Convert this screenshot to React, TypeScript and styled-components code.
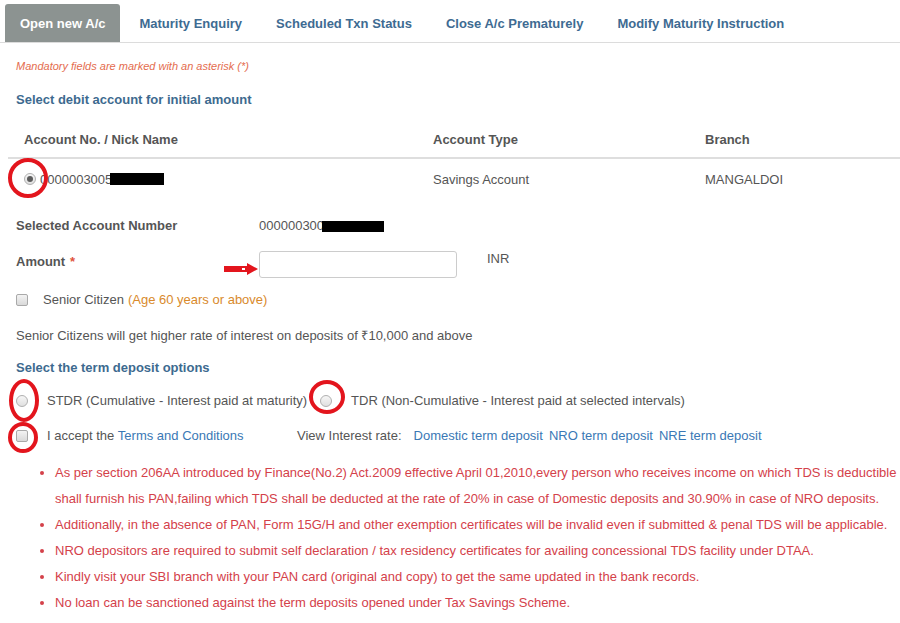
import React from "react";
import styled, { createGlobalStyle } from "styled-components";

const Global = createGlobalStyle`
  html, body { margin: 0; padding: 0; background: #fff; }
  body { font-family: "Liberation Sans", Arial, sans-serif; font-size: 13px; color: #555; }
  * { box-sizing: border-box; }
`;

const Page = styled.div`
  position: relative;
  width: 900px;
  height: 623px;
  overflow: hidden;
`;

const TabBar = styled.div`
  display: flex;
  padding: 4px 0 0 5px;
  border-bottom: 1px solid #dcdcdc;
`;

const Tab = styled.div<{ $active?: boolean }>`
  height: 38px;
  padding: 0 15px;
  margin-right: 4px;
  display: flex;
  align-items: center;
  font-weight: bold;
  font-size: 13px;
  border-radius: 3px 3px 0 0;
  background: ${(p) => (p.$active ? "#8c9391" : "transparent")};
  color: ${(p) => (p.$active ? "#ffffff" : "#3e6b92")};
`;

const Content = styled.div`
  padding: 0 0 0 16px;
`;

const Mandatory = styled.div`
  margin-top: 16px;
  font-size: 11px;
  line-height: 14px;
  font-style: italic;
  color: #e46c4e;
`;

const SectionTitle = styled.div<{ $mt: number }>`
  margin-top: ${(p) => p.$mt}px;
  font-size: 13px;
  line-height: 16px;
  font-weight: bold;
  color: #3d6a8f;
`;

const Table = styled.div`
  margin: 15px 0 0 -8px;
  display: grid;
  grid-template-columns: 425px 272px 1fr;
`;

const HeadCell = styled.div<{ $first?: boolean }>`
  height: 36px;
  display: flex;
  align-items: center;
  padding-left: ${(p) => (p.$first ? 16 : 0)}px;
  padding-bottom: 2px;
  font-weight: bold;
  color: #555;
  border-bottom: 2px solid #dedede;
`;

const BodyCell = styled.div<{ $first?: boolean }>`
  height: 40px;
  display: flex;
  align-items: center;
  padding-left: ${(p) => (p.$first ? 16 : 0)}px;
  color: #555;
`;

const Radio = styled.span<{ $checked?: boolean }>`
  display: inline-block;
  position: relative;
  width: 12px;
  height: 12px;
  border-radius: 50%;
  border: 1px solid #b0b0b0;
  background: linear-gradient(#f6f6f6, #e0e0e0);
  flex: none;
  &::after {
    content: "";
    display: ${(p) => (p.$checked ? "block" : "none")};
    position: absolute;
    left: 2px;
    top: 2px;
    width: 6px;
    height: 6px;
    border-radius: 50%;
    background: #5c5c5c;
  }
`;

const Checkbox = styled.span`
  display: inline-block;
  width: 12px;
  height: 12px;
  border-radius: 2px;
  border: 1px solid #a9a9a9;
  background: linear-gradient(#f3f3f3, #d9d9d9);
  flex: none;
`;

const Redact = styled.span<{ $w: number; $h: number }>`
  display: inline-block;
  width: ${(p) => p.$w}px;
  height: ${(p) => p.$h}px;
  background: #000;
  vertical-align: middle;
  margin-left: -2px;
`;

const AccNo = styled.span`
  margin-left: 4px;
  display: inline-flex;
  align-items: center;
`;

const FormRow = styled.div<{ $mt: number }>`
  margin-top: ${(p) => p.$mt}px;
  display: flex;
  align-items: flex-start;
`;

const Label = styled.div<{ $mt?: number }>`
  width: 243px;
  flex: none;
  font-weight: bold;
  line-height: 16px;
  margin-top: ${(p) => p.$mt ?? 0}px;
  color: #555;
`;

const Value = styled.div`
  line-height: 20px;
  display: flex;
  align-items: center;
  color: #555;
`;

const Star = styled.span`
  color: #e0533c;
  margin-left: 5px;
`;

const AmountInput = styled.input`
  width: 198px;
  height: 27px;
  border: 1px solid #cccccc;
  border-radius: 3px;
  outline: none;
  font: inherit;
  padding: 0 6px;
`;

const Unit = styled.div`
  margin-left: 30px;
  line-height: 16px;
  color: #555;
`;

const CheckRow = styled.div<{ $mt: number }>`
  margin-top: ${(p) => p.$mt}px;
  display: flex;
  align-items: center;
  line-height: 16px;
  color: #555;
`;

const Gap = styled.span<{ $w: number }>`
  display: inline-block;
  width: ${(p) => p.$w}px;
  flex: none;
`;

const Orange = styled.span`
  color: #d98a2c;
  margin-left: 4px;
`;

const Para = styled.div<{ $mt: number }>`
  margin-top: ${(p) => p.$mt}px;
  line-height: 16px;
  color: #555;
`;

const LinkText = styled.span`
  color: #3a78b5;
`;

const AcceptGroup = styled.div`
  width: 281px;
  flex: none;
  display: flex;
  align-items: center;
`;

const LinkGroup = styled.div`
  display: flex;
  align-items: center;
  gap: 6px;
`;

const RateLabel = styled.span`
  margin-right: 6px;
`;

const Notes = styled.ul`
  margin: 16px 0 0 0;
  padding-left: 39px;
  color: #d4414a;
  line-height: 26px;
  font-size: 13px;
`;

const Note = styled.li`
  white-space: nowrap;
`;

const Ring = styled.div`
  position: absolute;
  border: 4px solid #e3151d;
  border-radius: 50%;
  pointer-events: none;
`;

const ArrowBox = styled.svg`
  position: absolute;
  left: 223px;
  top: 262px;
`;

export default function App() {
  return (
    <Page>
      <Global />
      <TabBar>
        <Tab $active>Open new A/c</Tab>
        <Tab>Maturity Enquiry</Tab>
        <Tab>Scheduled Txn Status</Tab>
        <Tab>Close A/c Prematurely</Tab>
        <Tab>Modify Maturity Instruction</Tab>
      </TabBar>
      <Content>
        <Mandatory>Mandatory fields are marked with an asterisk (*)</Mandatory>
        <SectionTitle $mt={19}>Select debit account for initial amount</SectionTitle>
        <Table>
          <HeadCell $first>Account No. / Nick Name</HeadCell>
          <HeadCell>Account Type</HeadCell>
          <HeadCell>Branch</HeadCell>
          <BodyCell $first>
            <Radio $checked />
            <AccNo>
              0000003005
              <Redact $w={54} $h={12} />
            </AccNo>
          </BodyCell>
          <BodyCell>Savings Account</BodyCell>
          <BodyCell>MANGALDOI</BodyCell>
        </Table>
        <FormRow $mt={17}>
          <Label $mt={2}>Selected Account Number</Label>
          <Value>
            000000300
            <Redact $w={62} $h={11} />
          </Value>
        </FormRow>
        <FormRow $mt={15}>
          <Label $mt={3}>
            Amount<Star>*</Star>
          </Label>
          <AmountInput type="text" />
          <Unit>INR</Unit>
        </FormRow>
        <CheckRow $mt={14}>
          <Checkbox />
          <Gap $w={15} />
          Senior Citizen<Orange>(Age 60 years or above)</Orange>
        </CheckRow>
        <Para $mt={20}>
          Senior Citizens will get higher rate of interest on deposits of ₹10,000 and above
        </Para>
        <SectionTitle $mt={16}>Select the term deposit options</SectionTitle>
        <CheckRow $mt={17}>
          <Radio />
          <Gap $w={19} />
          STDR (Cumulative - Interest paid at maturity)
          <Gap $w={13} />
          <Radio />
          <Gap $w={19} />
          TDR (Non-Cumulative - Interest paid at selected intervals)
        </CheckRow>
        <CheckRow $mt={19}>
          <AcceptGroup>
            <Checkbox />
            <Gap $w={19} />
            I accept the&nbsp;<LinkText>Terms and Conditions</LinkText>
          </AcceptGroup>
          <LinkGroup>
            <RateLabel>View Interest rate:</RateLabel>
            <LinkText>Domestic term deposit</LinkText>
            <LinkText>NRO term deposit</LinkText>
            <LinkText>NRE term deposit</LinkText>
          </LinkGroup>
        </CheckRow>
        <Notes>
          <Note>
            As per section 206AA introduced by Finance(No.2) Act.2009 effective April 01,2010,every person who receives income on which TDS is deductible
            <br />
            shall furnish his PAN,failing which TDS shall be deducted at the rate of 20% in case of Domestic deposits and 30.90% in case of NRO deposits.
          </Note>
          <Note>
            Additionally, in the absence of PAN, Form 15G/H and other exemption certificates will be invalid even if submitted &amp; penal TDS will be applicable.
          </Note>
          <Note>
            NRO depositors are required to submit self declaration / tax residency certificates for availing concessional TDS facility under DTAA.
          </Note>
          <Note>
            Kindly visit your SBI branch with your PAN card (original and copy) to get the same updated in the bank records.
          </Note>
          <Note>No loan can be sanctioned against the term deposits opened under Tax Savings Scheme.</Note>
        </Notes>
      </Content>

      <Ring style={{ left: 8, top: 158, width: 40, height: 40 }} />
      <Ring style={{ left: 9, top: 379, width: 30, height: 43 }} />
      <Ring style={{ left: 309, top: 380, width: 36, height: 34 }} />
      <Ring style={{ left: 8, top: 422, width: 30, height: 31 }} />
      <ArrowBox width="36" height="14" viewBox="0 0 36 14">
        <path d="M1 4 H24 V1 L35 7 L24 13 V10 H1 Z" fill="#e3151d" />
        <rect x="19" y="6" width="3" height="2" fill="#fff" />
      </ArrowBox>
    </Page>
  );
}
